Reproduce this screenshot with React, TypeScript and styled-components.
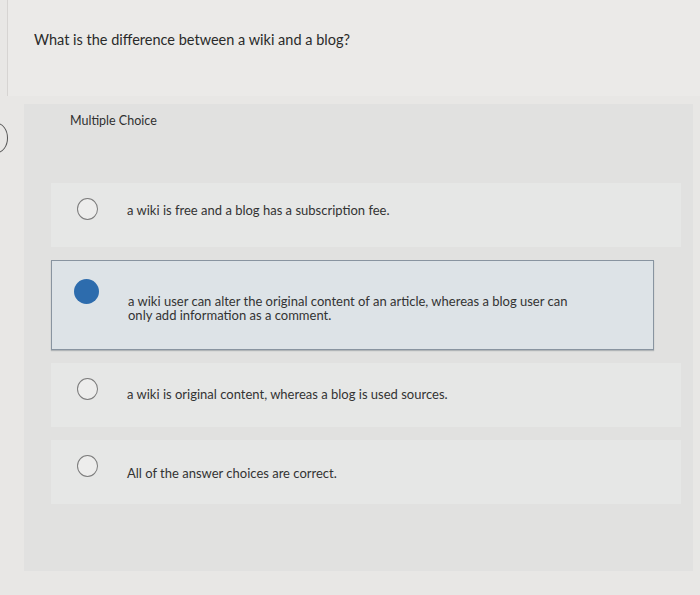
import styled, { createGlobalStyle } from "styled-components";

const GlobalStyle = createGlobalStyle`
  html, body {
    margin: 0;
    padding: 0;
    background: #e7e6e4;
  }
  body {
    font-family: Lato, "Open Sans", "Liberation Sans", sans-serif;
    color: #2e2e2e;
  }
`;

const Page = styled.div`
  position: relative;
  width: 700px;
  height: 595px;
  overflow: hidden;
  display: flex;
  flex-direction: column;
  background: #e8e7e5;
`;

const QuestionBar = styled.div`
  margin-left: 7px;
  height: 96px;
  box-sizing: border-box;
  padding: 31px 0 0 26px;
  background: #ebeae8;
  border-left: 1px solid #d6d4d2;
  font-size: 14.5px;
  color: #2a2a2a;
`;

const Panel = styled.div`
  margin: 8px 7px 0 24px;
  height: 467px;
  box-sizing: border-box;
  padding: 9px 0 0 27px;
  background: #e1e1e0;
  display: flex;
  flex-direction: column;
`;

const Kind = styled.div`
  padding-left: 19px;
  font-size: 12.5px;
  color: #303030;
  margin-bottom: 55px;
`;

const Options = styled.div`
  display: flex;
  flex-direction: column;
  gap: 13px;
`;

const Option = styled.div<{ $selected?: boolean }>`
  display: flex;
  align-items: flex-start;
  gap: 29px;
  width: ${(p) => (p.$selected ? "603px" : "630px")};
  min-height: ${(p) => (p.$selected ? "90px" : "64px")};
  box-sizing: border-box;
  padding: ${(p) => (p.$selected ? "18px 0 0 22px" : "14px 0 0 25px")};
  background: ${(p) => (p.$selected ? "#dde3e7" : "#e6e7e6")};
  border: 1px solid ${(p) => (p.$selected ? "#8894a0" : "transparent")};
  box-shadow: ${(p) => (p.$selected ? "0 1px 1px rgba(90,100,110,0.35)" : "none")};
`;

const Radio = styled.span<{ $checked?: boolean }>`
  flex: none;
  width: ${(p) => (p.$checked ? "25px" : "21px")};
  height: ${(p) => (p.$checked ? "25px" : "22px")};
  box-sizing: border-box;
  border-radius: 50%;
  border: ${(p) => (p.$checked ? "none" : "1.5px solid #7c7c7c")};
  background: ${(p) => (p.$checked ? "#2d6cad" : "#ededec")};
`;

const Label = styled.div<{ $drop: number }>`
  margin-top: ${(p) => p.$drop}px;
  font-size: 13px;
  line-height: 14px;
  color: #333;
  max-width: 445px;
`;

const EdgeButton = styled.span`
  position: absolute;
  left: -14px;
  top: 123px;
  width: 20px;
  height: 28px;
  border: 1.5px solid #555;
  border-radius: 50%;
`;

const answers = [
  { text: "a wiki is free and a blog has a subscription fee.", drop: 5 },
  {
    text:
      "a wiki user can alter the original content of an article, whereas a blog user can only add information as a comment.",
    drop: 15,
    selected: true,
  },
  { text: "a wiki is original content, whereas a blog is used sources.", drop: 9 },
  { text: "All of the answer choices are correct.", drop: 11 },
];

const App = () => {
  return (
    <>
      <GlobalStyle />
      <Page>
        <EdgeButton />
        <QuestionBar>What is the difference between a wiki and a blog?</QuestionBar>
        <Panel>
          <Kind>Multiple Choice</Kind>
          <Options>
            {answers.map((a) => (
              <Option key={a.text} $selected={a.selected}>
                <Radio $checked={a.selected} />
                <Label $drop={a.drop}>{a.text}</Label>
              </Option>
            ))}
          </Options>
        </Panel>
      </Page>
    </>
  );
};

export default App;
